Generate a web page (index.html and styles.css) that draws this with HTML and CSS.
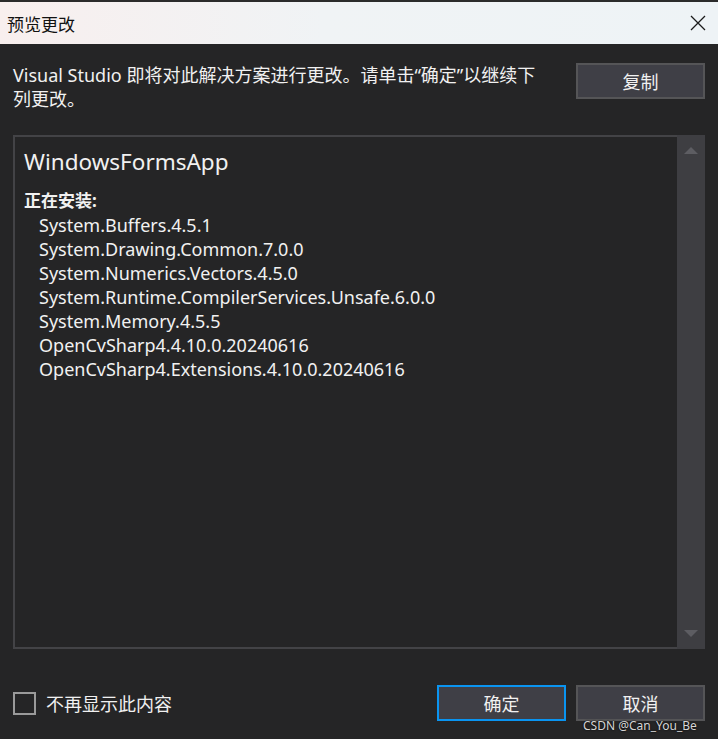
FILE: index.html
```html
<!DOCTYPE html>
<html lang="zh-CN">
<head>
    <meta charset="UTF-8">
    <meta name="viewport" content="width=device-width, initial-scale=1.0">
    <title>预览更改</title>
    <link rel="stylesheet" href="styles.css">
</head>
<body>
    <div class="titlebar">
        <span class="title">预览更改</span>
        <span class="close">
            <svg width="16" height="16" viewBox="0 0 16 16"><path d="M1 1L15 15M15 1L1 15" stroke="#1b1b1b" stroke-width="1.3" fill="none"/></svg>
        </span>
    </div>

    <div class="dialog">
        <div class="header">
            <p class="message">Visual Studio 即将对此解决方案进行更改。请单击“确定”以继续下<br>列更改。</p>
            <button class="button">复制</button>
        </div>

        <div class="changes">
            <div class="changes-body">
                <div class="project">WindowsFormsApp</div>
                <div class="section">正在安装:</div>
                <ul class="packages">
                    <li>System.Buffers.4.5.1</li>
                    <li>System.Drawing.Common.7.0.0</li>
                    <li>System.Numerics.Vectors.4.5.0</li>
                    <li>System.Runtime.CompilerServices.Unsafe.6.0.0</li>
                    <li>System.Memory.4.5.5</li>
                    <li>OpenCvSharp4.4.10.0.20240616</li>
                    <li>OpenCvSharp4.Extensions.4.10.0.20240616</li>
                </ul>
            </div>
            <div class="scrollbar">
                <span class="arrow up"></span>
                <span class="arrow down"></span>
            </div>
        </div>

        <div class="footer">
            <label class="check"><span class="box"></span>不再显示此内容</label>
            <div class="actions">
                <button class="button primary">确定</button>
                <button class="button">取消</button>
            </div>
        </div>
    </div>

    <div class="watermark">CSDN @Can_You_Be</div>
</body>
</html>
```

FILE: styles.css
```css
* {
    box-sizing: border-box;
}
body {
    margin: 0;
    width: 718px;
    height: 739px;
    overflow: hidden;
    position: relative;
    background: #252526;
    color: #f1f1f1;
    font-family: "Noto Sans", "Noto Sans CJK SC", sans-serif;
    font-size: 18px;
}
.titlebar {
    height: 44px;
    border-top: 2px solid #2b2b2b;
    background: linear-gradient(90deg, #f8efee, #f0f3f5 45%, #eef3f6);
    display: flex;
    align-items: center;
    justify-content: space-between;
    padding: 0 12px 0 7px;
}
.title {
    color: #111;
    font-size: 17px;
}
.close svg {
    display: block;
}
.dialog {
    padding: 19px 13px 0;
}
.header {
    display: flex;
    justify-content: space-between;
    align-items: flex-start;
}
.message {
    margin: 0;
    line-height: 24px;
    white-space: nowrap;
}
.button {
    width: 129px;
    height: 36px;
    background: #3f3f46;
    border: 2px solid #555557;
    color: #f1f1f1;
    font-family: inherit;
    font-size: 18px;
    padding: 0;
}
.button.primary {
    border-color: #0a94f0;
}
.changes {
    margin-top: 24px;
    height: 514px;
    display: flex;
}
.changes-body {
    flex: 1;
    border: 2px solid #434346;
    border-right: none;
    padding: 10px 9px;
}
.project {
    font-size: 22.5px;
    line-height: 30px;
}
.section {
    margin-top: 12px;
    font-weight: bold;
    font-size: 17px;
    line-height: 24px;
}
.packages {
    list-style: none;
    margin: 0;
    padding: 0 0 0 15px;
    font-size: 18px;
    line-height: 24px;
}
.scrollbar {
    width: 28px;
    background: #3e3e42;
    display: flex;
    flex-direction: column;
    justify-content: space-between;
    align-items: center;
    padding: 12px 0;
}
.arrow {
    width: 0;
    height: 0;
    border-left: 7px solid transparent;
    border-right: 7px solid transparent;
}
.arrow.up {
    border-bottom: 7px solid #5d5d62;
}
.arrow.down {
    border-top: 7px solid #5d5d62;
}
.footer {
    margin-top: 36px;
    display: flex;
    align-items: center;
    justify-content: space-between;
}
.check {
    display: flex;
    align-items: center;
    gap: 10px;
}
.box {
    width: 23px;
    height: 23px;
    border: 2px solid #9a9a9a;
}
.actions {
    display: flex;
    gap: 10px;
}
.watermark {
    position: absolute;
    left: 583px;
    top: 717px;
    font-size: 12px;
    color: #d6d6d6;
    text-shadow: 0 0 2px #000;
}
```
